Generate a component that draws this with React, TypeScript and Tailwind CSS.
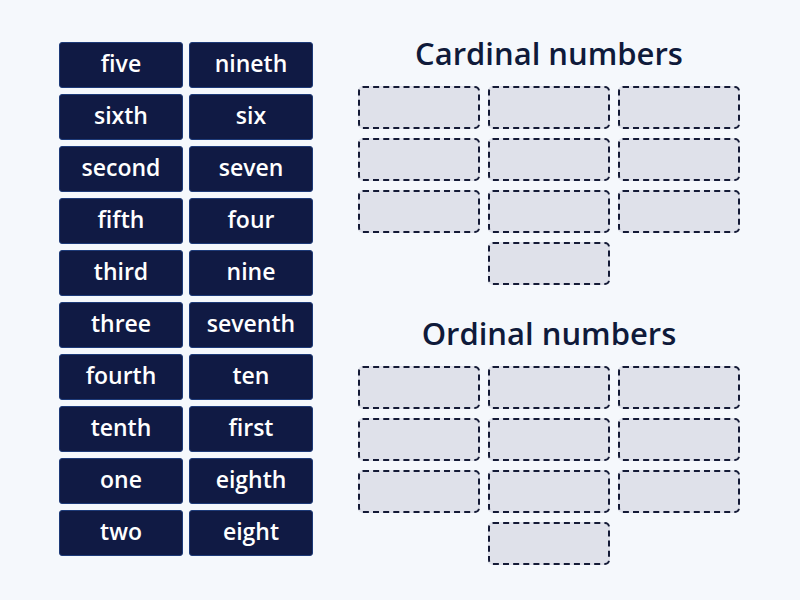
const words = [
  ["five", "nineth"],
  ["sixth", "six"],
  ["second", "seven"],
  ["fifth", "four"],
  ["third", "nine"],
  ["three", "seventh"],
  ["fourth", "ten"],
  ["tenth", "first"],
  ["one", "eighth"],
  ["two", "eight"],
];

function Tile({ label }: { label: string }) {
  return (
    <div className="flex h-[46px] w-[124px] items-center justify-center rounded-[3px] border border-[#1d3a78] bg-[#101a44] pb-[4px] text-[23px] font-semibold text-white">
      {label}
    </div>
  );
}

function DropGroup({ title }: { title: string }) {
  return (
    <div className="flex flex-col items-center">
      <div className="h-[46px] text-[31px] leading-[46px] font-semibold text-[#0f1a3a]">{title}</div>
      <div className="mt-[10px] grid grid-cols-[122px_122px_122px] gap-x-[8px] gap-y-[9px]">
        {Array.from({ length: 9 }).map((_, i) => (
          <div
            key={i}
            className="h-[43px] rounded-[5px] border-2 border-dashed border-[#141a36] bg-[#dfe1ea]"
          />
        ))}
        <div className="col-start-2 h-[43px] rounded-[5px] border-2 border-dashed border-[#141a36] bg-[#dfe1ea]" />
      </div>
    </div>
  );
}

export default function App() {
  return (
    <div
      className="flex h-[600px] w-[800px] bg-[#f5f8fc]"
      style={{ fontFamily: '"Open Sans", "Noto Sans", sans-serif' }}
    >
      <div className="ml-[59px] mt-[42px] grid h-fit grid-cols-[124px_124px] gap-x-[6px] gap-y-[6px]">
        {words.flatMap((row) => row).map((w) => (
          <Tile key={w} label={w} />
        ))}
      </div>
      <div className="ml-[45px] mt-[30px] flex w-[382px] flex-col gap-[25px]">
        <DropGroup title="Cardinal numbers" />
        <DropGroup title="Ordinal numbers" />
      </div>
    </div>
  );
}
